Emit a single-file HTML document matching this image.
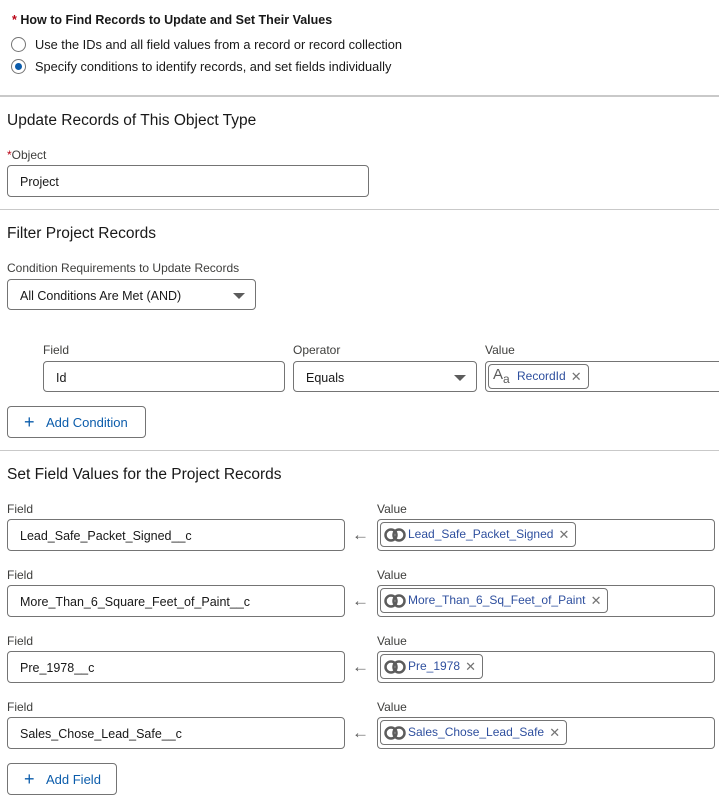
<!DOCTYPE html>
<html><head><meta charset="utf-8"><style>
*{box-sizing:border-box;margin:0;padding:0}
body{width:719px;height:795px;overflow:hidden;background:#fff;font-family:"Liberation Sans",sans-serif;color:#181818;position:relative;font-size:12.5px}
.a{position:absolute;white-space:nowrap}
.lbl{font-size:12px;color:#3e3e3c}
.box{position:absolute;border:1px solid #747474;border-radius:4px;background:#fff;padding-left:12px;padding-top:2px;line-height:29px;font-size:12.5px;white-space:nowrap}
.h{font-size:15.5px;color:#181818}
.hr{position:absolute;left:0;width:719px;height:1px;background:#c9c9c9}
.radio{position:absolute;width:15px;height:15px;border:1px solid #747474;border-radius:50%;left:11px}
.dd{position:absolute;right:10px;top:13px;width:0;height:0;border-left:6px solid transparent;border-right:6px solid transparent;border-top:6px solid #5c5c5c}
.pill{position:absolute;top:2px;height:25px;border:1px solid #747474;border-radius:4px;background:#fff;line-height:23px;padding-left:27px;padding-right:22px;color:#2e4f9e;font-size:12px}
.pill .x{position:absolute;right:6px;top:0;color:#747474;font-size:13px}
.arrow{position:absolute;left:352px;font-size:17px;color:#5c5c5c}
.btn{position:absolute;border:1px solid #747474;border-radius:4px;height:32px;line-height:31px;color:#0b5cab;font-size:13px;padding-left:38px}
.btn .p{position:absolute;left:16px;top:0;font-size:18px}
</style></head><body>
<div class="a" style="left:12px;top:13px;font-weight:bold;font-size:12.5px"><span style="color:#ba0517">*</span> How to Find Records to Update and Set Their Values</div>
<div class="radio" style="top:37px"></div>
<div class="a" style="left:35px;top:37px;font-size:12.8px">Use the IDs and all field values from a record or record collection</div>
<div class="radio" style="top:59px"><div style="position:absolute;left:3px;top:3px;width:7px;height:7px;border-radius:50%;background:#0b5cab"></div></div>
<div class="a" style="left:35px;top:59px;font-size:12.8px">Specify conditions to identify records, and set fields individually</div>
<div class="hr" style="top:95px;height:2px"></div>
<div class="a h" style="left:7px;top:112px">Update Records of This Object Type</div>
<div class="a lbl" style="left:7px;top:148px"><span style="color:#ba0517">*</span>Object</div>
<div class="box" style="left:7px;top:165px;width:362px;height:32px">Project</div>
<div class="hr" style="top:209px"></div>
<div class="a h" style="left:7px;top:225px">Filter Project Records</div>
<div class="a lbl" style="left:7px;top:261px">Condition Requirements to Update Records</div>
<div class="box" style="left:7px;top:279px;width:249px;height:31px">All Conditions Are Met (AND)<div class="dd"></div></div>
<div class="a lbl" style="left:43px;top:343px">Field</div>
<div class="a lbl" style="left:293px;top:343px">Operator</div>
<div class="a lbl" style="left:485px;top:343px">Value</div>
<div class="box" style="left:43px;top:361px;width:242px;height:31px">Id</div>
<div class="box" style="left:293px;top:361px;width:184px;height:31px">Equals<div class="dd"></div></div>
<div class="box" style="left:485px;top:361px;width:240px;height:31px;padding:0">
<div class="pill" style="left:2px;padding-left:28px">
<span style="position:absolute;left:4px;top:-2px;color:#5c5c5c;font-size:15px">A<span style="font-size:12px;position:relative;top:4px">a</span></span>RecordId<span class="x">✕</span></div></div>
<div class="btn" style="left:7px;top:406px;width:139px"><span class="p">+</span>Add Condition</div>
<div class="hr" style="top:450px"></div>
<div class="a h" style="left:7px;top:466px">Set Field Values for the Project Records</div>

<div class="a lbl" style="left:7px;top:502px">Field</div><div class="a lbl" style="left:377px;top:502px">Value</div>
<div class="box" style="left:7px;top:519px;width:338px;height:32px">Lead_Safe_Packet_Signed__c</div>
<div class="a arrow" style="top:525px">&#8592;</div>
<div class="box" style="left:377px;top:519px;width:338px;height:32px;padding:0"><div class="pill" style="left:2px"><svg style="position:absolute;left:3px;top:5px" width="22" height="14"><circle cx="7" cy="7" r="5.5" fill="none" stroke="#5c5c5c" stroke-width="2.5"/><circle cx="15" cy="7" r="5.5" fill="none" stroke="#5c5c5c" stroke-width="2.5"/></svg>Lead_Safe_Packet_Signed<span class="x">✕</span></div></div>

<div class="a lbl" style="left:7px;top:568px">Field</div><div class="a lbl" style="left:377px;top:568px">Value</div>
<div class="box" style="left:7px;top:585px;width:338px;height:32px">More_Than_6_Square_Feet_of_Paint__c</div>
<div class="a arrow" style="top:591px">&#8592;</div>
<div class="box" style="left:377px;top:585px;width:338px;height:32px;padding:0"><div class="pill" style="left:2px"><svg style="position:absolute;left:3px;top:5px" width="22" height="14"><circle cx="7" cy="7" r="5.5" fill="none" stroke="#5c5c5c" stroke-width="2.5"/><circle cx="15" cy="7" r="5.5" fill="none" stroke="#5c5c5c" stroke-width="2.5"/></svg>More_Than_6_Sq_Feet_of_Paint<span class="x">✕</span></div></div>

<div class="a lbl" style="left:7px;top:634px">Field</div><div class="a lbl" style="left:377px;top:634px">Value</div>
<div class="box" style="left:7px;top:651px;width:338px;height:32px">Pre_1978__c</div>
<div class="a arrow" style="top:657px">&#8592;</div>
<div class="box" style="left:377px;top:651px;width:338px;height:32px;padding:0"><div class="pill" style="left:2px"><svg style="position:absolute;left:3px;top:5px" width="22" height="14"><circle cx="7" cy="7" r="5.5" fill="none" stroke="#5c5c5c" stroke-width="2.5"/><circle cx="15" cy="7" r="5.5" fill="none" stroke="#5c5c5c" stroke-width="2.5"/></svg>Pre_1978<span class="x">✕</span></div></div>

<div class="a lbl" style="left:7px;top:700px">Field</div><div class="a lbl" style="left:377px;top:700px">Value</div>
<div class="box" style="left:7px;top:717px;width:338px;height:32px">Sales_Chose_Lead_Safe__c</div>
<div class="a arrow" style="top:723px">&#8592;</div>
<div class="box" style="left:377px;top:717px;width:338px;height:32px;padding:0"><div class="pill" style="left:2px"><svg style="position:absolute;left:3px;top:5px" width="22" height="14"><circle cx="7" cy="7" r="5.5" fill="none" stroke="#5c5c5c" stroke-width="2.5"/><circle cx="15" cy="7" r="5.5" fill="none" stroke="#5c5c5c" stroke-width="2.5"/></svg>Sales_Chose_Lead_Safe<span class="x">✕</span></div></div>

<div class="btn" style="left:7px;top:763px;width:110px"><span class="p">+</span>Add Field</div>
</body></html>
